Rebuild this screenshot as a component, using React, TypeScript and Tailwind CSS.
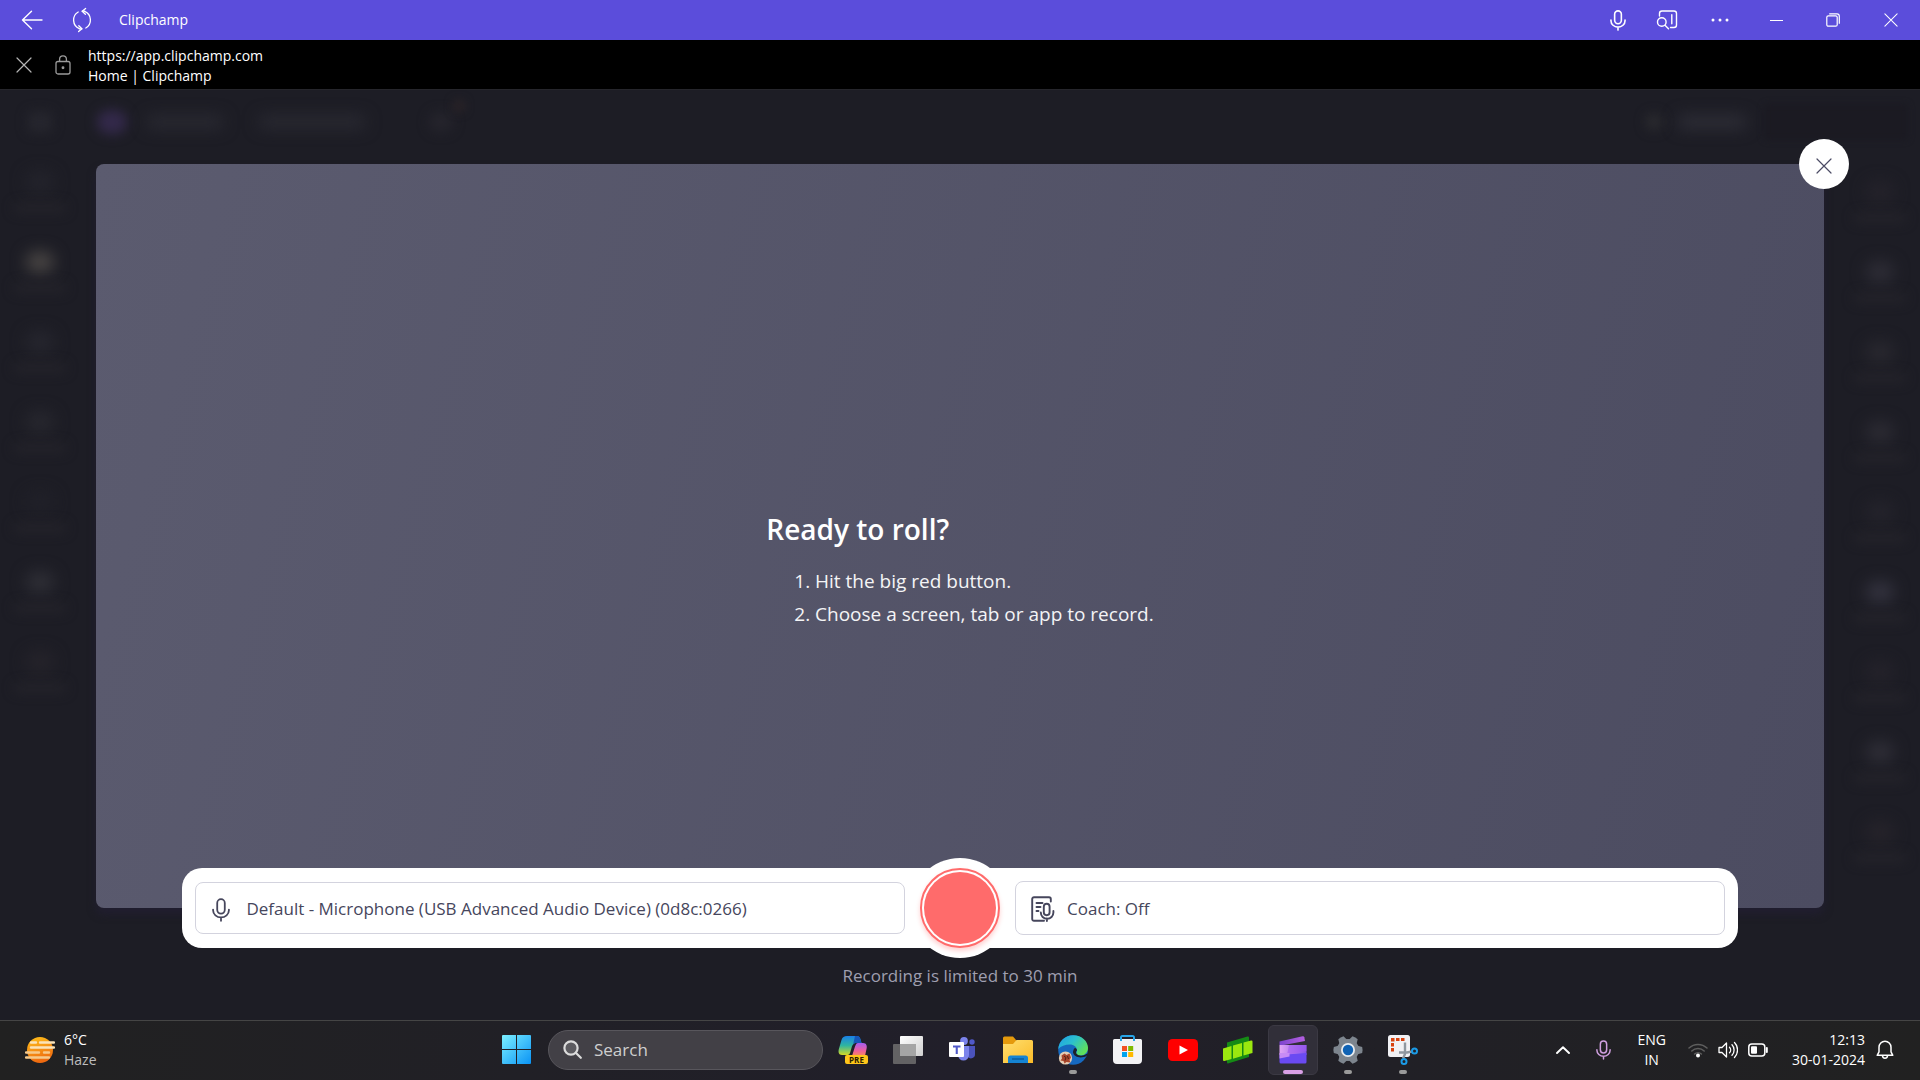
import React from "react";

const uiFont = "font-['Open_Sans','Noto_Sans',sans-serif]";

type IconProps = { className?: string };

function MicIcon({ className }: IconProps) {
  return (
    <svg viewBox="0 0 20 26" className={className} fill="none" stroke="currentColor" strokeWidth="2" strokeLinecap="round">
      <rect x="5.8" y="1" width="8.4" height="16" rx="4.2" />
      <path d="M1.2 12.5v.8a8.8 8 0 0 0 17.6 0v-.8M10 21.3V25" />
    </svg>
  );
}

function CrossIcon({ className }: IconProps) {
  return (
    <svg viewBox="0 0 16 16" className={className} fill="none" stroke="currentColor" strokeWidth="1.2" strokeLinecap="round">
      <path d="M1 1l14 14M15 1L1 15" />
    </svg>
  );
}

function TitleBar() {
  return (
    <header className="flex h-10 shrink-0 items-center bg-[#5b4ddb] text-white">
      <div className="flex flex-1 items-center pl-[21px]">
        <button aria-label="Back" className="mr-7">
          <svg viewBox="0 0 22 20" className="h-5 w-[22px]" fill="none" stroke="currentColor" strokeWidth="1.4" strokeLinecap="round" strokeLinejoin="round">
            <path d="M21 10H1.5M10.5 1.2L1.5 10l9 8.8" />
          </svg>
        </button>
        <button aria-label="Reload" className="mr-[26px]">
          <svg viewBox="0 0 22 26" className="h-[26px] w-[22px]" fill="none" stroke="currentColor" strokeWidth="1.3" strokeLinecap="round" strokeLinejoin="round">
            <path d="M7.2 5A9.3 9.3 0 0 0 8.3 21.6M14.8 21A9.3 9.3 0 0 0 13.7 4.4" />
            <path d="M14.6 1.4l-3.4 2.8 3.2 3M7.6 24.6l3.3-2.8-3.1-3" />
            <path d="M11.2 4.2h2.5M8.3 21.8h2.6" />
          </svg>
        </button>
        <h1 className="text-[14px] leading-5">Clipchamp</h1>
      </div>
      <div className="flex items-center">
        <button aria-label="Microphone in use" className="flex w-[49px] justify-center">
          <MicIcon className="h-[21px] w-4" />
        </button>
        <button aria-label="Search in sidebar" className="flex w-[49px] justify-center">
          <svg viewBox="0 0 22 22" className="h-[22px] w-[22px]" fill="none" stroke="currentColor" strokeWidth="1.4" strokeLinecap="round" strokeLinejoin="round">
            <path d="M3.5 7V4.5a2.5 2.5 0 0 1 2.500-2.500H18a2.500 2.500 0 0 1 2.500 2.500V16a2.500 2.500 0 0 1-2.500 2.500h-3.500M15.800 5.800v9" />
            <circle cx="5.800" cy="13" r="4.300" />
            <path d="M9 16.200l3.500 3.500" />
          </svg>
        </button>
        <button aria-label="More" className="flex w-[57px] justify-center">
          <svg viewBox="0 0 18 4" className="h-1 w-[18px]" fill="currentColor">
            <circle cx="2" cy="2" r="1.500" />
            <circle cx="9" cy="2" r="1.500" />
            <circle cx="16" cy="2" r="1.500" />
          </svg>
        </button>
        <button aria-label="Minimise" className="flex w-[56px] justify-center">
          <span className="h-px w-[13px] bg-white" />
        </button>
        <button aria-label="Restore" className="flex w-[58px] justify-center">
          <svg viewBox="0 0 14 14" className="h-[14px] w-[14px]" fill="none" stroke="currentColor" strokeWidth="1.200">
            <rect x=".8" y="2.800" width="10.400" height="10.400" rx="1.500" />
            <path d="M3.200.8H11a2.300 2.300 0 0 1 2.300 2.300v7.600" />
          </svg>
        </button>
        <button aria-label="Close" className="flex w-[58px] justify-center">
          <CrossIcon className="h-[14px] w-[14px]" />
        </button>
      </div>
    </header>
  );
}

function AddressBar() {
  return (
    <div className="flex h-[50px] shrink-0 items-center border-b border-[#26262c] bg-black pl-4 text-white">
      <button aria-label="Dismiss" className="mr-[23px] text-[#b5b5b5]">
        <CrossIcon className="h-4 w-4" />
      </button>
      <svg viewBox="0 0 16 20" className="mr-[17px] h-5 w-4 text-[#9a9a9a]" fill="none" stroke="currentColor" strokeWidth="1.300">
        <rect x="1" y="6.500" width="14" height="12.500" rx="2" />
        <path d="M4.600 6.500V4.200a3.400 3.400 0 0 1 6.800 0v2.300" />
        <circle cx="8" cy="12.800" r=".8" fill="currentColor" />
      </svg>
      <div className="pt-0.5 text-[14px] leading-5">
        <p>https://app.clipchamp.com</p>
        <p>Home | Clipchamp</p>
      </div>
    </div>
  );
}

const leftRail = ["bg-[#24242c]", "bg-[#4c4846]", "bg-[#27272f]", "bg-[#28282f]", "bg-[#212129]", "bg-[#303037]", "bg-[#26242b]"];
const rightRail = ["bg-[#25232b]", "bg-[#2f2e37]", "bg-[#2a2930]", "bg-[#2d2c34]", "bg-[#25242c]", "bg-[#353440]", "bg-[#25232b]", "bg-[#302f38]", "bg-[#27242b]"];

function BlurredRail({ tones }: { tones: string[] }) {
  return (
    <div className="flex w-20 flex-col">
      {tones.map((tone, i) => (
        <div key={i} className="flex h-20 flex-col items-center gap-3 pt-1">
          <span className={`h-5 w-7 rounded-full blur-[8px] ${tone}`} />
          <span className="h-2 w-13 rounded bg-[#25242b] blur-[6px]" />
        </div>
      ))}
    </div>
  );
}

function BlurredEditor() {
  return (
    <div aria-hidden="true" className="flex flex-1 flex-col">
      <div className="flex h-16 items-center pl-7">
        <span className="h-5 w-6 rounded bg-[#26262e] blur-[6px]" />
        <span className="ml-[45px] h-6 w-[30px] rounded-full bg-[#33294a] blur-[6px]" />
        <span className="ml-5 h-3 w-[76px] rounded bg-[#2b2b33] blur-[8px]" />
        <span className="ml-9 h-3 w-[106px] rounded bg-[#2b2b33] blur-[8px]" />
        <span className="ml-16 h-5 w-6 rounded-full bg-[#25242c] blur-[6px]" />
        <span className="mb-8 h-3 w-3 rounded-full bg-[#2c2427] blur-[5px]" />
        <span className="flex-1" />
        <span className="h-4 w-4 rounded-full bg-[#2c2c30] blur-[6px]" />
        <span className="ml-4 mr-[18px] h-3 w-[68px] rounded bg-[#303039] blur-[8px]" />
        <span className="mr-3 h-9 w-36 rounded bg-[#1b1a22] blur-[3px]" />
      </div>
      <div className="flex flex-1 justify-between">
        <div className="pt-[14px]">
          <BlurredRail tones={leftRail} />
        </div>
        <div className="pt-6">
          <BlurredRail tones={rightRail} />
        </div>
      </div>
    </div>
  );
}

function CoachIcon({ className }: IconProps) {
  return (
    <svg viewBox="0 0 24 26" className={className} fill="none" stroke="currentColor" strokeWidth="1.900" strokeLinecap="round" strokeLinejoin="round">
      <path d="M13 24.800H3A1.800 1.800 0 0 1 1.200 23V3A1.800 1.800 0 0 1 3 1.200h15A1.800 1.800 0 0 1 19.800 3v2.500" />
      <path d="M5.500 7h6M5.500 11h4M5.500 15h2" />
      <rect x="12.800" y="7.800" width="5.800" height="11.400" rx="2.900" />
      <path d="M9.800 16.500a6.300 6.300 0 0 0 12.600 0V15M15.900 22.500v2.500" />
    </svg>
  );
}

function RecorderDialog() {
  return (
    <section role="dialog" aria-label="Screen recorder" className="absolute inset-x-0 top-0 flex flex-col px-24 pt-[74px]">
      <div className="relative flex h-[744px] flex-col items-center justify-center rounded-lg bg-[linear-gradient(105deg,#5b5b6f,#4c4c61)] pb-4 text-white shadow-[0_6px_8px_#211e30]">
        <button aria-label="Close recorder" className="absolute -right-[25px] -top-[25px] flex size-[50px] items-center justify-center rounded-full bg-white pt-[3px] text-[#4b4b64]">
          <CrossIcon className="size-4" />
        </button>
        <div className="pt-[86px]">
          <h2 className="text-[28px] font-semibold leading-9">Ready to roll?</h2>
          <ol className="mt-[18px] list-inside list-decimal pl-7 text-[19px] leading-[33px] text-[#f4f4f6]">
            <li>Hit the big red button.</li>
            <li>Choose a screen, tab or app to record.</li>
          </ol>
        </div>
      </div>
      <div className="relative -mt-10 grid h-20 w-[90%] grid-cols-[minmax(0,1fr)_100px_minmax(0,1fr)] items-center gap-[5px] self-center rounded-[20px] bg-white px-[13px] text-[#46465c]">
        <label className="relative flex h-[52px] items-center">
          <MicIcon className="pointer-events-none absolute left-[17px] top-[15px] h-[26px] w-[18px]" />
          <select aria-label="Microphone" className="h-full w-full appearance-none rounded-lg border border-[#d3d3de] bg-transparent pl-[50px] pt-0.5 text-[17px]">
            <option>Default - Microphone (USB Advanced Audio Device) (0d8c:0266)</option>
          </select>
        </label>
        <span className="-my-[10px] flex size-[100px] items-center justify-center rounded-full bg-white">
          <button aria-label="Start recording" className="flex size-20 items-center justify-center rounded-full border-2 border-[#ff6b6b] bg-white shadow-[0_3px_5px_#ffd0d0]">
            <span className="size-[72px] rounded-full bg-[#ff6b6b]" />
          </button>
        </span>
        <button className="flex h-[54px] items-center rounded-lg border border-[#d3d3de] bg-white pl-[15px] pt-0.5 text-[17px]">
          <CoachIcon className="mr-3 h-[26px] w-6" />
          Coach: Off
        </button>
      </div>
      <p className="mt-4 text-center text-[17px] leading-6 text-[#9f9fb0]">Recording is limited to 30 min</p>
    </section>
  );
}

function WindowsIcon() {
  return (
    <svg viewBox="0 0 29 29" className="size-[29px]">
      <defs>
        <linearGradient id="win" x1="0" y1="0" x2="1" y2="1">
          <stop offset="0" stopColor="#7cf0ff" />
          <stop offset="1" stopColor="#0a93f5" />
        </linearGradient>
      </defs>
      <path fill="url(#win)" d="M1 0h13v14H0V1a1 1 0 0 1 1-1zM15 0h13a1 1 0 0 1 1 1v13H15zM0 15h14v14H1a1 1 0 0 1-1-1zM15 15h14v13a1 1 0 0 1-1 1H15z" />
    </svg>
  );
}

function CopilotIcon() {
  return (
    <svg viewBox="0 0 30 30" className="size-[30px]">
      <defs>
        <linearGradient id="cpA" x1="0" y1="0" x2="0" y2="1">
          <stop offset="0" stopColor="#1a7fe8" />
          <stop offset=".5" stopColor="#2fb5a0" />
          <stop offset="1" stopColor="#d3d926" />
        </linearGradient>
        <linearGradient id="cpB" x1="0" y1="0" x2="0" y2="1">
          <stop offset="0" stopColor="#a35cf0" />
          <stop offset=".6" stopColor="#ef5f9a" />
          <stop offset="1" stopColor="#f88a5a" />
        </linearGradient>
      </defs>
      <path d="M9 1h10c3 0 3.500 3 4.500 7h-5c-3 0-4 1.500-5 5l-1.300 4.500C11.500 20 10 20 8 20H4c-3.500 0-4-3-3-6.500L3.500 5C4.500 2 6 1 9 1z" fill="url(#cpA)" />
      <path d="M17 1h2c3 0 3.500 3 4.500 7h-5c-1.500 0-2.600.4-3.400 1.400z" fill="#1556b8" />
      <path d="M20 8h5c3.500 0 4.300 3 3.500 6L27 21H14l3-9.500C18 9 18.500 8 20 8z" fill="url(#cpB)" />
      <rect x="7" y="20" width="23" height="9" rx="2" fill="#ffc61a" />
      <text x="18.500" y="27.500" fontSize="8" fontWeight="700" textAnchor="middle" fill="#2b2000" fontFamily="Open Sans, sans-serif">PRE</text>
    </svg>
  );
}

function TaskViewIcon() {
  return (
    <svg viewBox="0 0 30 28" className="h-7 w-[30px]">
      <defs>
        <linearGradient id="tv" x1="0" y1="0" x2="1" y2="1">
          <stop offset="0" stopColor="#ffffff" />
          <stop offset="1" stopColor="#cfcfcf" />
        </linearGradient>
      </defs>
      <rect x="7" y="0" width="23" height="20" rx="1" fill="url(#tv)" />
      <rect x="0" y="8" width="23" height="20" rx="1" fill="#6f6f6f" fillOpacity=".85" />
      <rect x="7" y="8" width="16" height="12" fill="#a5a5a5" />
    </svg>
  );
}

function TeamsIcon() {
  return (
    <svg viewBox="0 0 28 26" className="h-[26px] w-7">
      <circle cx="15" cy="4" r="3.900" fill="#7b83eb" />
      <circle cx="23" cy="5" r="2.700" fill="#5059c9" />
      <path d="M19 9h7v8a4 4 0 0 1-7 3z" fill="#4b53bc" />
      <path d="M9 9h11v9a5.500 5.500 0 0 1-11 0z" fill="#7b83eb" />
      <rect x="0" y="5" width="15" height="15" rx="1" fill="#fff" />
      <path d="M4 8.500h7.500v2H8.800V17H6.700v-6.500H4z" fill="#5059c9" />
    </svg>
  );
}

function ExplorerIcon() {
  return (
    <svg viewBox="0 0 30 28" className="h-7 w-[30px]">
      <defs>
        <linearGradient id="fe" x1="0" y1="0" x2="1" y2="1">
          <stop offset="0" stopColor="#ffdf70" />
          <stop offset="1" stopColor="#fbbb28" />
        </linearGradient>
      </defs>
      <path d="M0 2a1.500 1.500 0 0 1 1.500-1.500H10L13 4v5H0z" fill="#e59a0c" />
      <path d="M0 8h10l3.500-4H28.500A1.500 1.500 0 0 1 30 5.500V27H0z" fill="url(#fe)" />
      <path d="M5 27v-5a2.500 2.500 0 0 1 2.500-2.500h15A2.500 2.500 0 0 1 25 22v5z" fill="#1584d3" />
      <path d="M9 23h12" stroke="#0b5c9c" strokeWidth="1.500" />
    </svg>
  );
}

function EdgeIcon() {
  return (
    <svg viewBox="0 0 30 30" className="size-[30px]">
      <defs>
        <linearGradient id="edA" x1="0" y1="0" x2="1" y2=".6">
          <stop offset="0" stopColor="#1f9de8" />
          <stop offset=".5" stopColor="#2cc0cd" />
          <stop offset="1" stopColor="#5fe05b" />
        </linearGradient>
      </defs>
      <circle cx="15" cy="15" r="14.800" fill="#1669c0" />
      <path d="M.3 14C1 5.500 7.500.2 15.200.2 24 .2 30 6.500 30 12.800c0 4.700-3.300 7.700-7.300 7.700-3.200 0-5-1.300-4.500-2.300.6-1 .8-1.700.8-2.900 0-3.200-3-5.800-7.300-5.800C7 9.500 3 11 .3 14z" fill="url(#edA)" />
      <path d="M19 15.500c-1 .6-1.500 2-.5 3.200 2 2.500 6.500 2.600 9.800.3l1.700-.5-1.500 2.500c-6 3-12.500 1-13.500-3.500 0-1.500 1-4.700 2.300-4.400.9.400 1.700 1.200 1.700 2.400z" fill="#1b1f2a" />
      <circle cx="7.500" cy="23" r="6.600" fill="#e3cdb4" />
      <path d="M3.500 20.500l3-2 2 1.500 3-1.500 1.500 4-1.500 2.500 1 2.500-4-.5-2 1.500-1-2.500-3-.5 1.500-2z" fill="#a8452b" />
      <path d="M6 21l2 1.500-1 3M9.500 21l1 3" stroke="#4a2015" strokeWidth="1" fill="none" />
    </svg>
  );
}

function StoreIcon() {
  return (
    <svg viewBox="0 0 29 29" className="size-[29px]">
      <path d="M0 5.500A1.500 1.500 0 0 1 1.500 4h26A1.500 1.500 0 0 1 29 5.500V25a4 4 0 0 1-4 4H4a4 4 0 0 1-4-4z" fill="#f3f3f5" />
      <path d="M8 6V2.500A1.500 1.500 0 0 1 9.500 1h10A1.500 1.500 0 0 1 21 2.500V6" fill="none" stroke="#28a5e8" strokeWidth="2" />
      <path d="M9 2h11v2H9z" fill="#211f28" />
      <path d="M9 11h5v5H9z" fill="#f25022" />
      <path d="M15.200 11h5v5h-5z" fill="#7fba00" />
      <path d="M9 17h5v5H9z" fill="#00a4ef" />
      <path d="M15.200 17h5v5h-5z" fill="#ffb900" />
    </svg>
  );
}

function YouTubeIcon() {
  return (
    <svg viewBox="0 0 30 22" className="h-[22px] w-[30px]">
      <rect width="30" height="22" rx="4.500" fill="#f00" />
      <path d="M11.500 6.500L20 11l-8.500 4.500z" fill="#fff" />
    </svg>
  );
}

function GreenTilesIcon() {
  return (
    <svg viewBox="0 0 30 30" className="size-[30px]">
      <path d="M4 7.500L24.500 1.500Q26 1.200 26 2.500V22L5 28.500Q4 28.700 4 27z" fill="#158a15" />
      <path d="M0 13.500l8.500-2.500v13L1.500 26Q0 26.300 0 25z" fill="#9be80f" />
      <path d="M10 10.500L19 8v13l-9 2.700z" fill="#9be80f" />
      <path d="M20.500 7.500L28 5.500q1.500-.3 1.500 1V18l-9 2.500z" fill="#9be80f" />
    </svg>
  );
}

function ClipchampIcon() {
  return (
    <svg viewBox="0 0 28 28" className="size-7">
      <defs>
        <linearGradient id="ccA" x1="0" y1="0" x2="1" y2="0">
          <stop offset="0" stopColor="#e3a6f5" />
          <stop offset="1" stopColor="#8352e8" />
        </linearGradient>
        <linearGradient id="ccB" x1="0" y1="0" x2="1" y2="0">
          <stop offset="0" stopColor="#7d45cf" />
          <stop offset="1" stopColor="#b55fe0" />
        </linearGradient>
      </defs>
      <path d="M.5 5.500L23.500.3Q25 0 25.300 1.300L26 5 5 9H.5z" fill="url(#ccB)" />
      <path d="M.5 9h27v10H.5z" fill="url(#ccA)" />
      <path d="M10 9h17.500v6L8 19z" fill="#a25cf0" fillOpacity=".6" />
      <path d="M.5 19l27-2V26a1.500 1.500 0 0 1-1.500 1.500H2A1.500 1.500 0 0 1 .5 26z" fill="#6a4af2" />
      <path d="M.5 17h10v3.500l-10 2z" fill="#c78bf5" />
    </svg>
  );
}

function SettingsIcon() {
  const teeth = [0, 60, 120, 180, 240, 300];
  return (
    <svg viewBox="0 0 30 30" className="size-[30px]">
      {teeth.map((a) => (
        <path key={a} d="M10 8L12 .8q3-.8 6 0L20 8z" transform={`rotate(${a + 30} 15 15)`} fill="#7d858e" />
      ))}
      <circle cx="15" cy="15" r="11" fill="#7d858e" />
      <circle cx="15" cy="15" r="7" fill="#e8ecf0" />
      <circle cx="15" cy="15" r="5.200" fill="#0f62b4" />
    </svg>
  );
}

function SnipIcon() {
  return (
    <svg viewBox="0 0 30 30" className="size-[30px]">
      <rect x="0" y="0" width="22" height="22" rx="2.500" fill="#f1f1f4" />
      <path d="M3 3h3.500v3.500H3zM8 3h3.500v3H8zM13 3h3.500v3H13zM3 8h3v3.500H3zM3 13h3v3.500H3z" fill="#d8410d" />
      <path d="M17 7.500V19l-2 4.500M11 17.500h8l5-1" fill="none" stroke="#8f979f" strokeWidth="2.400" />
      <circle cx="26.500" cy="16" r="2.500" fill="none" stroke="#1b9be6" strokeWidth="2" />
      <circle cx="16" cy="26.500" r="2.500" fill="none" stroke="#1b9be6" strokeWidth="2" />
    </svg>
  );
}

const apps: { name: string; icon: React.ReactNode; state?: "open" | "active" }[] = [
  { name: "Copilot", icon: <CopilotIcon /> },
  { name: "Task view", icon: <TaskViewIcon /> },
  { name: "Teams", icon: <TeamsIcon /> },
  { name: "File Explorer", icon: <ExplorerIcon /> },
  { name: "Edge", icon: <EdgeIcon />, state: "open" },
  { name: "Microsoft Store", icon: <StoreIcon /> },
  { name: "YouTube", icon: <YouTubeIcon /> },
  { name: "Tiles", icon: <GreenTilesIcon /> },
  { name: "Clipchamp", icon: <ClipchampIcon />, state: "active" },
  { name: "Settings", icon: <SettingsIcon />, state: "open" },
  { name: "Snipping Tool", icon: <SnipIcon />, state: "open" },
];

function WeatherIcon() {
  return (
    <svg viewBox="0 0 30 26" className="h-[26px] w-[30px]">
      <defs>
        <linearGradient id="sun" x1="0" y1="0" x2=".3" y2="1">
          <stop offset="0" stopColor="#ffc21a" />
          <stop offset="1" stopColor="#ee6a10" />
        </linearGradient>
      </defs>
      <circle cx="15" cy="13" r="13" fill="url(#sun)" />
      <g stroke="#fbe3b8" strokeWidth="2.400" strokeLinecap="round">
        <path d="M6 5.500h5M15 5.500h14M6 10.500h23" />
        <path d="M1 15.500h13M19 15.500h5M1 20.500h23" stroke="#f6c98a" />
      </g>
    </svg>
  );
}

function Taskbar() {
  return (
    <footer className="grid h-[60px] shrink-0 grid-cols-[1fr_auto_1fr] items-center border-t border-[#454545] bg-linear-to-r from-[#212121] via-[#211f2a] to-[#212121] pb-0.5 text-[14px] leading-5 text-white">
      <button className="flex items-center gap-[9px] pl-[25px] text-left">
        <WeatherIcon />
        <span className="flex flex-col">
          <span>6°C</span>
          <span className="text-[#bdbdbd]">Haze</span>
        </span>
      </button>
      <div className="flex items-center pr-px">
        <button aria-label="Start" className="mr-1 flex w-[55px] justify-center">
          <WindowsIcon />
        </button>
        <label className="mr-0.5 flex h-10 w-[275px] items-center rounded-full border border-[#58565c] bg-[#424046] pl-[14px]">
          <svg viewBox="0 0 19 19" className="mr-3 size-[19px]" fill="#5c5b60" stroke="#dcdcdc" strokeWidth="2.200" strokeLinecap="round">
            <circle cx="8" cy="8" r="6.600" />
            <path d="M13 13l4.800 4.800" />
          </svg>
          <input aria-label="Search" placeholder="Search" className="w-40 bg-transparent text-[17px] outline-none placeholder:text-[#cfcfcf]" />
        </label>
        {apps.map(({ name, icon, state }) => (
          <button key={name} aria-label={name} className="flex h-[50px] w-[55px] items-center justify-center">
            <span className={`relative flex size-[50px] items-center justify-center rounded-md ${state === "active" ? "border border-[#3b3943] bg-[#312f39]" : ""}`}>
              {icon}
              {state === "open" && <span className="absolute bottom-px h-1 w-2 rounded-full bg-[#9a9a9a]" />}
              {state === "active" && <span className="absolute bottom-0 h-1 w-5 rounded-full bg-[#d9a0e6]" />}
            </span>
          </button>
        ))}
      </div>
      <div className="flex items-center justify-end pr-[26px]">
        <button aria-label="Show hidden icons" className="mr-[26px]">
          <svg viewBox="0 0 14 8" className="h-2 w-[14px]" fill="none" stroke="currentColor" strokeWidth="1.900" strokeLinecap="round" strokeLinejoin="round">
            <path d="M1 7l6-5.800L13 7" />
          </svg>
        </button>
        <button aria-label="Microphone" className="mr-[26px] text-[#cf9fdf]">
          <MicIcon className="h-5 w-[15px]" />
        </button>
        <button className="mr-[22px] text-center">
          ENG
          <br />
          IN
        </button>
        <button aria-label="Network, volume and battery" className="mr-6 flex items-center gap-[10px]">
          <svg viewBox="0 0 20 16" className="h-4 w-5" fill="none" stroke="#5e5e5e" strokeWidth="1.500" strokeLinecap="round">
            <path d="M1 6a13 13 0 0 1 18 0M3.800 9a9 9 0 0 1 12.400 0M6.600 12a5 5 0 0 1 6.800 0" />
            <circle cx="10" cy="13.500" r="2" fill="#fff" stroke="none" />
          </svg>
          <svg viewBox="0 0 20 18" className="h-[18px] w-5" fill="none" stroke="currentColor" strokeWidth="1.300" strokeLinecap="round" strokeLinejoin="round">
            <path d="M1 6.500h3L8.500 2v14L4 11.500H1zM11.500 6.200a4 4 0 0 1 0 5.600M14 3.800a7.500 7.500 0 0 1 0 10.400M16.500 1.500a10.800 10.800 0 0 1 0 15" />
          </svg>
          <svg viewBox="0 0 20 14" className="h-[14px] w-5" fill="none" stroke="currentColor" strokeWidth="1.500">
            <rect x=".8" y="1" width="16" height="12" rx="3" />
            <rect x="3" y="3.200" width="6" height="7.600" rx="1" fill="currentColor" stroke="none" />
            <path d="M18.800 5v4" strokeWidth="2" strokeLinecap="round" />
          </svg>
        </button>
        <button className="mr-[11px] text-right">
          12:13
          <br />
          30-01-2024
        </button>
        <button aria-label="Notifications">
          <svg viewBox="0 0 18 20" className="h-5 w-[18px]" fill="none" stroke="currentColor" strokeWidth="1.500" strokeLinejoin="round">
            <path d="M9 1.200a6 6 0 0 0-6 6v4.600L1.200 15.300h15.600L15 11.800V7.200a6 6 0 0 0-6-6zM6.500 15.500a2.500 2.700 0 0 0 5 0" />
          </svg>
        </button>
      </div>
    </footer>
  );
}

export default function App() {
  return (
    <div className={`flex min-h-screen flex-col bg-[#1d1d25] ${uiFont}`}>
      <TitleBar />
      <AddressBar />
      <main className="relative flex flex-1 flex-col overflow-hidden">
        <BlurredEditor />
        <RecorderDialog />
      </main>
      <Taskbar />
    </div>
  );
}
